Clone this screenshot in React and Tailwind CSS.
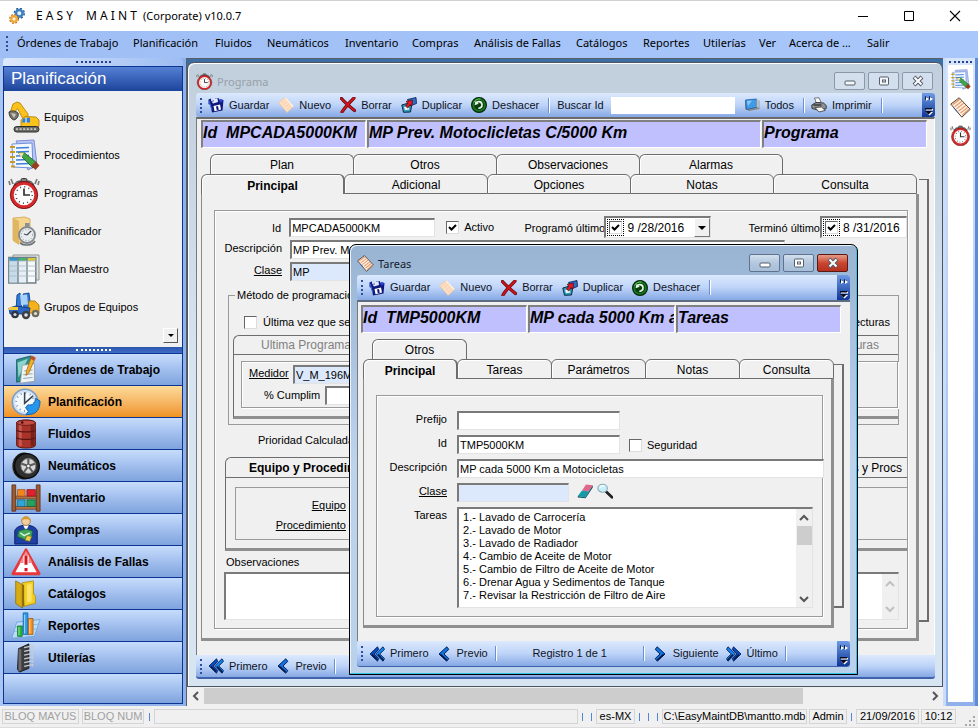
import React from "react";

const ARIAL = "font-['Liberation_Sans',Arial,sans-serif]";
const SEGOE = "font-['Noto_Sans','Segoe_UI',sans-serif]";

/* ---------- icons ---------- */

function Svg({ box = 16, className = "size-4", children }) {
  return (
    <svg viewBox={`0 0 ${box} ${box}`} className={`block shrink-0 ${className}`} aria-hidden="true">
      {children}
    </svg>
  );
}

const GearsIcon = () => (
  <Svg>
    <circle cx="10.3" cy="5.3" r="4.9" fill="none" stroke="#2a5f98" strokeWidth="1.6" strokeDasharray="2.1 1.75" />
    <circle cx="10.3" cy="5.3" r="3.3" fill="#e8f1fa" stroke="#3f82c4" strokeWidth="2.6" />
    <circle cx="5" cy="11" r="4.2" fill="none" stroke="#b96c14" strokeWidth="1.5" strokeDasharray="1.8 1.5" />
    <circle cx="5" cy="11" r="2.7" fill="#fff8e6" stroke="#f0a93c" strokeWidth="2.4" />
  </Svg>
);

const SaveIcon = () => (
  <Svg>
    <path d="M0.5 2.5 3 1.5V4L7 3.5V1l4 .3.3 2L15.500 3l-1 10.5L4 15.500 2.500 8 .5 7Z" fill="#10187c" />
    <path d="M3.500 4.500 6 4.200V1.500l3.500-.3.5 3.800L5 6.500Z" fill="#dfe8ff" />
    <path d="m11.500 2 3 .2-.2 2.800-2.400.4Z" fill="#2a44d8" />
    <path d="m5.500 9 6.500-1.400 1 5-6.500 1.600Z" fill="#fff" />
    <path d="m8 9.500 2-.4.8 3.600-2 .5Z" fill="#10187c" />
    <path d="M1 3.500 3.800 13" stroke="#3f6bf0" strokeWidth="1" />
  </Svg>
);

const NewIcon = () => (
  <Svg>
    <path d="M0.5 5.5 7 .5 15.5 9.5 9 15.5Z" fill="#fde0c4" stroke="#e9c09a" strokeWidth=".7" />
    <path d="M3 6 7.5 2.5M5 8l4.500-3.500M7 10l4.500-3.500M9 12.300l4.400-3.700" stroke="#f8cda8" strokeWidth="1" />
    <path d="m7 .7 8.300 8.800" stroke="#fff3e4" strokeWidth="1.2" />
  </Svg>
);

const NoteIcon = ({ className }) => (
  <Svg className={className}>
    <path d="M.6 5.4 7 .6 15.4 9.4 9 15.4Z" fill="#fff3e6" stroke="#3c2c20" strokeWidth=".7" />
    <path d="M2 5.8 7.6 1.6M3.6 7.4 9 3.2M5 9l5.4-4.2M6.6 10.6 12 6.4M8 12.2l5.4-4.2M9.3 14l5-4.6" stroke="#e59c6e" strokeWidth="1" />
    <path d="M3 8.5 6 11.8" stroke="#3a66c8" strokeWidth="1" strokeDasharray="1 1" />
  </Svg>
);

const DeleteIcon = () => (
  <Svg>
    <path d="M1.5 1.5C4 4.5 9 9 14.5 13.5M14 1C10 5 5 10 2 15" fill="none" stroke="#5e0508" strokeWidth="3.2" strokeLinecap="round" />
    <path d="M1.5 1.5C4 4.5 9 9 14.5 13.5M14 1C10 5 5 10 2 15" fill="none" stroke="#d3141c" strokeWidth="1.8" strokeLinecap="round" />
  </Svg>
);

const CopyIcon = () => (
  <Svg>
    <path d="M6.5 2.5 15 .5 15.5 6.5 9 9Z" fill="#2f6fc4" stroke="#0b1c4a" strokeWidth=".8" />
    <path d="M.8 8 6 6.500l4.500 2.500L9.500 15 2.500 15.300Z" fill="#2b9cbe" stroke="#0a2c40" strokeWidth="1" />
    <path d="M3 10 7 9l1.500 3.500-4.500.8Z" fill="#e8f5fb" />
    <path d="M5 4.500 11.500 3l-.5 6-1.800-1.400L6.800 11 4.500 9 7 6Z" fill="#e01b24" stroke="#5e0508" strokeWidth=".7" />
  </Svg>
);

const UndoIcon = () => (
  <Svg>
    <circle cx="8" cy="8" r="7.4" fill="#17761d" stroke="#07260b" strokeWidth="1.2" />
    <circle cx="8" cy="8" r="5" fill="#0a3d10" />
    <path d="M5 6.200C6 4 10.500 4 11 7.500c.3 2.500-2 4-3.600 3.600" fill="none" stroke="#e4f7e1" strokeWidth="1.7" />
    <path d="M3.600 8.200 4.300 4.200 7.800 6.800Z" fill="#e4f7e1" />
    <path d="M2.500 5.500C4 2.600 7 1.600 9.500 2" fill="none" stroke="#5fd05c" strokeWidth="1" />
  </Svg>
);

const AllIcon = () => (
  <Svg>
    <path d="M1 4 12 2.5 15.5 4v8L5 14 1 12Z" fill="#8b8b86" />
    <path d="M1.500 3 12.500 2v8.300L2.500 12.500Z" fill="#3f9be8" stroke="#1c5aa8" strokeWidth=".8" />
    <path d="m12.500 2 2.800 1.200v7.500l-2.800-.4Z" fill="#b7bfc6" />
    <path d="m3 4 5-.5L4 9Z" fill="#8cc9f8" />
  </Svg>
);

const PrinterIcon = () => (
  <Svg>
    <path d="M3.5 1 8 .8 10 5 5.5 6.5Z" fill="#fff" stroke="#555" strokeWidth=".8" />
    <path d="M.8 8 5 5.500l7.500.5 2.700 2.500v3L9 13.500 1 11.500Z" fill="#8f9296" stroke="#2c2c2c" strokeWidth=".9" />
    <path d="m4 10.500 6.500-.5 3.800 3.400L8 15Z" fill="#f7f7f2" stroke="#333" strokeWidth=".8" />
    <path d="M2.500 8h8" stroke="#222" strokeWidth="1.2" />
  </Svg>
);

const ClockIcon = ({ className }) => (
  <Svg box={32} className={className}>
    <path d="M5 7 3 2M27 7l2-5M2 8 1 4M30 8l1-4" stroke="#777" strokeWidth="1.6" fill="none" />
    <path d="M6 9c1-5 6-6 8-4ZM26 9c-1-5-6-6-8-4Z" fill="#9a9a9a" stroke="#333" strokeWidth="1" />
    <rect x="13" y="1.5" width="6" height="4" rx="1.5" fill="#888" stroke="#333" />
    <circle cx="16" cy="18" r="12" fill="#fdfdfd" stroke="#d42a2c" strokeWidth="3.4" />
    <circle cx="16" cy="18" r="13.7" fill="none" stroke="#5a0709" strokeWidth=".8" />
    <circle cx="16" cy="18" r="8.2" fill="none" stroke="#444" strokeWidth="1.6" strokeDasharray="1 3.3" />
    <path d="M16 11.5V18h6" fill="none" stroke="#333" strokeWidth="1.7" />
  </Svg>
);

const DoubleLeft = () => (
  <Svg>
    <path d="M8.5.8 1 8l7.500 7.200 1.200-2.600L5 8l4.700-4.600Z" fill="#0a4cc0" stroke="#06205e" strokeWidth=".9" />
    <path d="M14 .8 6.500 8l7.500 7.200L15.500 12.600 10.800 8l4.700-4.600Z" fill="#1483e8" stroke="#06205e" strokeWidth=".9" />
    <path d="m9 8.400 5.600 6M3 8.400l5 5" stroke="#041544" strokeWidth="1.4" />
  </Svg>
);
const SingleLeft = () => (
  <Svg>
    <path d="M10.8.8 3 8l7.800 7.200 2-2.600L8 8l4.800-4.600Z" fill="#1272dc" stroke="#06205e" strokeWidth="1" />
    <path d="m4.300 8.400 6.300 5.800" stroke="#041544" strokeWidth="1.6" />
  </Svg>
);
const SingleRight = () => (
  <Svg>
    <path d="M5.2.8 13 8l-7.800 7.200-2-2.600L8 8 3.200 3.400Z" fill="#1272dc" stroke="#06205e" strokeWidth="1" />
    <path d="m11.700 8.400-6.300 5.800" stroke="#041544" strokeWidth="1.6" />
  </Svg>
);
const DoubleRight = () => (
  <Svg>
    <path d="M7.500.8 15 8l-7.500 7.200-1.200-2.600L11 8 6.300 3.400Z" fill="#0a4cc0" stroke="#06205e" strokeWidth=".9" />
    <path d="M2 .8 9.500 8 2 15.200.5 12.600 5.200 8 .5 3.400Z" fill="#1483e8" stroke="#06205e" strokeWidth=".9" />
    <path d="m7 8.400-5.600 6M13 8.400l-5 5" stroke="#041544" strokeWidth="1.4" />
  </Svg>
);

const EraserIcon = () => (
  <Svg>
    <path d="M5 7.5 9 1.5 15.8 2.2 12 8.5Z" fill="#e0678a" />
    <path d="M5 7.5 12 8.5 8.2 14.2 .8 13Z" fill="#159aa8" />
    <path d="M15.8 2.2V4.4L8.6 15.2 .8 14.4V13l7.4 1.2Z" fill="#0c5a6c" />
  </Svg>
);
const SearchIcon = () => (
  <Svg>
    <path d="m9.500 9 5.500 5.200" stroke="#222" strokeWidth="2.8" strokeLinecap="round" />
    <ellipse cx="5.6" cy="5.2" rx="4.8" ry="4" fill="#c9effb" stroke="#8fa9b6" strokeWidth="1.1" />
    <path d="M3 4.500C4 3 6 2.600 7.400 3.200" stroke="#fff" strokeWidth="1.1" fill="none" />
  </Svg>
);

const ExcavatorIcon = () => (
  <Svg box={32} className="size-8">
    <path d="M2 12 5 3 9 1l3 1 8 11v6l-4 1L9.500 7.500 6 12Z" fill="#fbc21c" stroke="#b07a08" strokeWidth=".8" />
    <path d="M1 11c3-2 7-1 9 1 1 3-1 6-4 7C3 18 1 15 1 11Z" fill="#77756c" stroke="#3d3b36" />
    <path d="m3 12 5 1-2 4Z" fill="#c9c7bd" />
    <path d="M13 19 17 15.500l11 .5 3 3v6.500H13Z" fill="#fbc21c" stroke="#b07a08" strokeWidth=".8" />
    <path d="m15 17.500 7-1v5h-8Z" fill="#2d7fd6" />
    <path d="M18 17v5" stroke="#fff" />
    <rect x="6" y="25.5" width="25" height="5.5" rx="2.700" fill="#6a6a66" stroke="#2f2f2d" />
    <path d="M8 28.200h21" stroke="#c8c8c2" strokeWidth="1.8" strokeDasharray="2 1.6" />
  </Svg>
);
const ProcedureIcon = ({ className = "size-8" }) => (
  <Svg box={32} className={className}>
    <path d="m8 2 18-1 3 25-9 5Z" fill="#b9c6f4" stroke="#7d8fd4" />
    <path d="m4 5 20-1 1 25L5 28Z" fill="#f3f8ff" stroke="#6f8fd8" />
    <path d="m8 9 13-.5M8 13l13-.5M8 17l13-.5M8 21l13-.5M8 25l13-.5" stroke="#3d7fd6" strokeWidth="1.4" />
    <path d="M2 8h5M2 13h5M2 18h5M2 23h5M3 27.500h4" stroke="#c99a28" strokeWidth="2" />
    <path d="M10 14 16 13.500 29 24l-4 5Z" fill="#3fa545" stroke="#1b5c22" strokeWidth=".8" />
    <path d="m10 14 3.500 4.500 2.500-5Z" fill="#f5ddb0" />
    <path d="m27.500 22.500 4 4-4 4.500-4-4Z" fill="#9c3c1e" />
  </Svg>
);
const PlannerIcon = () => (
  <Svg box={32} className="size-8">
    <path d="M5 3 17 2l5 2v22L14 28 5 25Z" fill="#f4d690" stroke="#cfa44f" strokeWidth=".8" />
    <path d="M5 3 11 6v24L5 26Z" fill="#e2b65e" />
    <circle cx="19" cy="20" r="8" fill="#e8ecee" stroke="#80888c" strokeWidth="1.8" />
    <rect x="17" y="8" width="4.5" height="3.5" fill="#8a9296" />
    <circle cx="19" cy="20" r="5.6" fill="none" stroke="#8b9498" strokeWidth="1" strokeDasharray="1 2" />
    <path d="m19 20 4-4M19 20l-3-1" stroke="#475055" strokeWidth="1.3" />
    <path d="M12 28c4 3 12 3 15-2" stroke="#6a7276" strokeWidth="1.6" fill="none" />
  </Svg>
);
const GridIcon = () => (
  <Svg box={32} className="size-8">
    <path d="M5 2h26v25H5Z" fill="#dfe3e0" stroke="#8d9792" />
    <path d="M.8 4.500h27v25.500H.8Z" fill="#f7fafc" stroke="#6f7d86" strokeWidth="1.4" />
    <path d="M1.500 5H10V8H1.500Z" fill="#2f93d0" />
    <path d="M10 5h9V8h-9Z" fill="#49b270" />
    <path d="M19 5h8.500V8H19Z" fill="#d7c83c" />
    <path d="M1.500 8H10v21.500H1.500Z" fill="#c7dcea" />
    <path d="M10 8h9v21.500h-9Z" fill="#e6eff6" />
    <path d="M10 5v25M19 5v25" stroke="#6f7d86" strokeWidth="1.3" />
    <path d="M1 8h27M1 13h27M1 18h27M1 23h27" stroke="#a9b6c0" strokeWidth=".8" />
  </Svg>
);
const ForkliftIcon = () => (
  <Svg box={32} className="size-8">
    <path d="M9 4 12 2l2 18H8ZM15 3l6-1 2 17h-7Z" fill="#2f7ad8" stroke="#123f8c" strokeWidth=".9" />
    <path d="m12 4 7-.5 1 10-7 .5Z" fill="#a9d2fb" />
    <path d="M21 10h6l4 4v8H20Z" fill="#f5b21c" stroke="#a56f06" strokeWidth=".8" />
    <path d="M1 17 8 15l14 2-1 6H2Z" fill="#2c66c4" stroke="#10306c" strokeWidth=".8" />
    <path d="M1 16h9v3H1Z" fill="#f2c93a" />
    <circle cx="7" cy="23.5" r="3.8" fill="#2d3440" /><circle cx="7" cy="23.5" r="1.6" fill="#cfd6dd" />
    <circle cx="18" cy="24" r="4.2" fill="#3c3f46" /><circle cx="18" cy="24" r="1.8" fill="#dfe3e8" />
    <circle cx="27.5" cy="22.5" r="3.8" fill="#6d6a5e" /><circle cx="27.5" cy="22.5" r="1.6" fill="#e5e1cf" />
  </Svg>
);

const OrdersIcon = () => (
  <Svg box={32} className="size-[30px]">
    <path d="m6 5 15-4v24L6 29Z" fill="#2f8f8b" stroke="#1d5f66" />
    <path d="m7 8 11-4-10 20Z" fill="#8fd3cd" />
    <path d="M12 11 25 9v19l-15 2Z" fill="#eef3f6" stroke="#8a979d" strokeWidth=".8" />
    <path d="m14 17 9-1M13 21l10-1M13 25l10-1" stroke="#8fa3ad" />
    <path d="m22 1 4 2-7 16-3 3 .5-5Z" fill="#f2b12a" stroke="#a1660e" strokeWidth=".8" />
    <path d="m22 1 4 2-1.400 3-4-2Z" fill="#c04a2b" />
  </Svg>
);
const PlanIcon = () => (
  <Svg box={32} className="size-[30px]">
    <circle cx="15" cy="16" r="13.6" fill="#cfe0f2" stroke="#7c9dc6" strokeWidth="1.8" />
    <circle cx="15" cy="16" r="10.8" fill="#f4f9fe" />
    <circle cx="15" cy="16" r="9.5" fill="none" stroke="#6582a4" strokeWidth="1.8" strokeDasharray="1 3.97" />
    <path d="M14.500 5.500v12l9-8" stroke="#35424f" strokeWidth="1.6" fill="none" />
    <path d="M18 19c5 1 8-2 8-7l5 3c0 9-4 13-9 14l-6 .5 2.500-3.500-3-4Z" fill="#2695ea" stroke="#0e5aaa" strokeWidth=".9" />
  </Svg>
);
const BarrelIcon = () => (
  <Svg box={32} className="size-[30px]">
    <path d="M6 4c0-4 20-4 20 0v24c0 4-20 4-20 0Z" fill="#a7332b" stroke="#5a1410" />
    <path d="M10 5v24" stroke="#c4594f" strokeWidth="3" />
    <path d="M23 6v23" stroke="#7a201a" strokeWidth="4" />
    <ellipse cx="16" cy="4" rx="10" ry="2.8" fill="#c24c42" stroke="#5a1410" strokeWidth=".8" />
    <path d="M6 12c3 2.400 17 2.400 20 0M6 20c3 2.400 17 2.400 20 0" stroke="#5a1410" strokeWidth="1.4" fill="none" />
    <circle cx="12" cy="3.8" r="1.3" fill="#3d0d0a" />
  </Svg>
);
const TireIcon = () => (
  <Svg box={32} className="size-[30px]">
    <ellipse cx="14" cy="16" rx="12.5" ry="14.500" fill="#161616" />
    <circle cx="17" cy="16" r="13.2" fill="#2f2f2f" stroke="#0a0a0a" strokeWidth="1.4" />
    <circle cx="18.5" cy="16" r="8" fill="#d8d8d8" stroke="#777" />
    <path d="M18.500 16V8.500M18.500 16l7-2.500M18.500 16l4.600 6.400M18.500 16l-4.600 6.400M18.500 16l-7-2.500" stroke="#5b5b5b" strokeWidth="2.2" />
    <circle cx="18.5" cy="16" r="2" fill="#efefef" stroke="#555" />
    <path d="M3 9c-2 5-2 10 0 14" stroke="#6a6a6a" strokeWidth="1.4" fill="none" strokeDasharray="2 2" />
  </Svg>
);
const ShelfIcon = () => (
  <Svg box={32} className="size-[30px]">
    <path d="M1 2h4v28H1ZM27 2h4v28h-4Z" fill="#9a5a34" stroke="#5f3117" strokeWidth=".9" />
    <path d="M5 14h22v3H5ZM5 25h22v3H5Z" fill="#b77346" stroke="#5f3117" strokeWidth=".7" />
    <path d="M7 7h8v7H7Z" fill="#f2861c" stroke="#a34e08" strokeWidth=".7" />
    <path d="M17 7h9v7h-9Z" fill="#e0202a" stroke="#860c12" strokeWidth=".7" />
    <path d="M7 18h8v7H7Z" fill="#30a6d2" stroke="#0e5c7c" strokeWidth=".7" />
    <path d="M17 18h9v7h-9Z" fill="#26a05a" stroke="#0c5a2c" strokeWidth=".7" />
  </Svg>
);
const BuyerIcon = () => (
  <Svg box={32} className="size-[30px]">
    <path d="M4 31V17c1-4 6-6 12-6s11 2 12 6v14Z" fill="#1f3fa8" stroke="#0b1c60" />
    <path d="m13 11 3 6 3-6Z" fill="#fff" />
    <circle cx="16" cy="6.5" r="4.6" fill="#f3cf9c" stroke="#9b6b2c" strokeWidth=".8" />
    <path d="M11 6c0-6 10-6 10 0-3-2-7-2-10 0Z" fill="#d69a32" />
    <path d="m8 17 8-2 7 2-1 7-8 2-7-3Z" fill="#3fa55b" stroke="#14602c" strokeWidth=".8" />
    <path d="m10 19 4 3 6-3" stroke="#d9f2dc" strokeWidth="1.6" fill="none" />
    <path d="m17 22 5 1-2 5-5-1Z" fill="#f0d24a" stroke="#8c7410" strokeWidth=".7" />
  </Svg>
);
const WarnIcon = () => (
  <Svg box={32} className="size-[30px]">
    <path d="M16 3 30 28.500H2Z" fill="#fff" stroke="#e8383c" strokeWidth="3" strokeLinejoin="round" />
    <path d="M16 4 23 17 9 17Z" fill="#f58c8c" />
    <path d="M16 9v10" stroke="#fff" strokeWidth="5.5" />
    <path d="M16 9v10M16 22.500v3.400" stroke="#d3161b" strokeWidth="3.2" />
  </Svg>
);
const CatalogIcon = () => (
  <Svg box={32} className="size-[30px]">
    <path d="M12 4 24 2v14l2 2v8l-12 3Z" fill="#f3cf25" stroke="#a98608" strokeWidth=".8" />
    <path d="m17 6 5-1v19l-5 1Z" fill="#fbe468" />
    <path d="m5 2 7 4v25l-7-5Z" fill="#d9ab12" stroke="#8c6b06" strokeWidth=".8" />
    <path d="M12 6h2v22l-2 3Z" fill="#8c6b06" />
  </Svg>
);
const ChartIcon = () => (
  <Svg box={32} className="size-[30px]">
    <path d="M6 12 31 9 25 27 1 29Z" fill="#bcdcf8" stroke="#6fa8dd" />
    <path d="m5 17 24-3M3 22l24-3M14 11 9 28M23 10l-5 17" stroke="#7db2e4" strokeWidth=".8" />
    <path d="M7 16h5v11H7Z" fill="#22b83a" stroke="#0d6d1d" strokeWidth=".8" />
    <path d="M13 2h5v23h-5Z" fill="#2c9cec" stroke="#125d9e" strokeWidth=".8" />
    <path d="M18.500 8h5v17h-5Z" fill="#f5921e" stroke="#9e540a" strokeWidth=".8" />
    <path d="M14.500 4v20M8.500 17v9M20 9v15" stroke="#fff" strokeOpacity=".6" />
  </Svg>
);
const ChipIcon = () => (
  <Svg box={32} className="size-[30px]">
    <path d="M8 6 19 1v26L9 31 7 28Z" fill="#3d3d40" stroke="#161618" />
    <path d="m8 6 3 1v22l-3 1Z" fill="#6b6b70" />
    <path d="m14 5 9-2v2M14 9l9-2v2M14 13l9-2v2M14 17l9-2v2M14 21l9-2v2M14 25l9-2v2" stroke="#c9ccd2" strokeWidth="1.5" fill="none" />
  </Svg>
);

const Chevron = ({ dir, className = "text-[#555]" }) => {
  const d = { up: "M2 8 6 4 10 8", down: "M2 4 6 8 10 4", left: "M8 2 4 6 8 10", right: "M4 2 8 6 4 10" }[dir];
  return (
    <svg viewBox="0 0 12 12" className={`block size-3 ${className}`} aria-hidden="true">
      <path d={d} fill="none" stroke="currentColor" strokeWidth="2" />
    </svg>
  );
};

/* ---------- small parts ---------- */

function Grip() {
  return <span className="h-[15px] w-0 shrink-0 border-l-2 border-dotted border-[#2b4f9b]" />;
}

function Sep() {
  return <span className="h-[15px] w-[2px] shrink-0 border-l border-r border-l-[#6a8fd2] border-r-white" />;
}

function ToolButton({ icon: Icon, children }) {
  return (
    <button type="button" className="flex shrink-0 items-center gap-[5px] whitespace-nowrap">
      <Icon />
      {children}
    </button>
  );
}

function Overflow() {
  return (
    <button
      type="button"
      aria-label="Más opciones"
      className="ml-auto flex h-full w-[13px] shrink-0 items-center justify-center rounded-r-[3px] bg-gradient-to-b from-[#6f9be6] to-[#0f3596]"
    >
      <svg viewBox="0 0 13 24" className="block h-6 w-[13px]" aria-hidden="true">
        <path d="m3 3 3 2-3 2Zm4 0 3 2-3 2Z" fill="#0a1a44" />
        <path d="m4 4 3 2-3 2Zm4 0 3 2-3 2Z" fill="#fff" />
        <path d="M4 16h7v1.500H4ZM4 19h7l-3.500 3.500Z" fill="#fff" />
        <path d="M3 15h7v1.500H3ZM3 18h7L6.500 21.500Z" fill="#0a0a1a" />
      </svg>
    </button>
  );
}

function Toolbar({ className, children }) {
  return (
    <div
      className={`flex shrink-0 items-center rounded-[3px] bg-gradient-to-b from-[#dce9fd] via-[#bed4f8] to-[#86a8e4] pl-1 text-[11px] text-[#10131c] ${className}`}
    >
      <span className="mr-[6px] flex"><Grip /></span>
      {children}
    </div>
  );
}

function EditButtons() {
  return (
    <>
      <ToolButton icon={SaveIcon}>Guardar</ToolButton>
      <ToolButton icon={NewIcon}>Nuevo</ToolButton>
      <ToolButton icon={DeleteIcon}>Borrar</ToolButton>
      <ToolButton icon={CopyIcon}>Duplicar</ToolButton>
      <ToolButton icon={UndoIcon}>Deshacer</ToolButton>
      <Sep />
    </>
  );
}

const SUNK = "border border-t-2 border-l-2 border-[#e3e3e3] border-t-[#7a7a7a] border-l-[#7a7a7a]";

function Input({ label, tint = false, className = "", ...rest }) {
  return (
    <input
      type="text"
      aria-label={label}
      className={`block h-[19px] shrink-0 rounded-none px-[1px] text-[11px] text-black outline-none ${tint ? "bg-[#dce9fd]" : "bg-white"} ${SUNK} ${className}`}
      {...rest}
    />
  );
}

function Check({ id, label, checked = false }) {
  return (
    <span className="relative block size-[13px] shrink-0">
      <input
        id={id}
        type="checkbox"
        aria-label={label}
        defaultChecked={checked}
        className="peer block size-[13px] appearance-none border border-t-[#666] border-l-[#666] border-r-[#dcdcdc] border-b-[#dcdcdc] bg-white"
      />
      <svg viewBox="0 0 13 13" className="pointer-events-none absolute inset-0 hidden size-[13px] peer-checked:block" aria-hidden="true">
        <path d="M3 6 5.500 8.500 10 4" fill="none" stroke="#000" strokeWidth="2" />
      </svg>
    </span>
  );
}

function DateField({ label, value, className, arrow }) {
  return (
    <div className={`flex h-[22px] shrink-0 items-center bg-white pl-[1px] ${SUNK} ${className}`}>
      <span className="border border-dotted border-black p-px"><Check label={`${label} activo`} checked /></span>
      <input
        type="text"
        aria-label={label}
        defaultValue={value}
        className="ml-[3px] block h-4 w-0 min-w-0 flex-1 bg-white text-[12px] text-black outline-none"
      />
      {arrow && (
        <button type="button" aria-label="Abrir calendario" className="flex h-full w-4 items-center justify-center border border-r-[#777] border-b-[#777] border-t-white border-l-white bg-[#f0f0f0]">
          <span className="border-x-4 border-t-4 border-x-transparent border-t-black" />
        </button>
      )}
    </div>
  );
}

function Window({ title, icon: Icon, active, className, children }) {
  const btn = active
    ? "border-[#5f7391] bg-gradient-to-b from-[#d3e0ee] via-[#b3c7de] to-[#a7bfd9] text-[#4a5a70]"
    : "border-[#8a98aa] bg-[#d3dfec] text-[#5c6878]";
  const close = active
    ? "border-[#5c1a14] bg-gradient-to-b from-[#e59a88] via-[#c9452f] to-[#b5301f] text-white"
    : btn;
  const glyph = active ? "#fff" : "#f4f6f8";
  return (
    <section
      className={`absolute flex flex-col rounded-t-[7px] border px-[7px] pb-[7px] ${
        active
          ? "border-black bg-gradient-to-b from-[#98b4d2] via-[#bcd3ee] to-[#b9d1ea] shadow-[inset_-1px_-1px_0_#33c3ea,inset_1px_1px_0_#eaf3fc]"
          : "border-[#4c5560] bg-gradient-to-b from-[#c1cedb] via-[#d7e4f2] to-[#d7e4f2] shadow-[inset_1px_1px_0_#fff]"
      } ${className}`}
    >
      <header className="flex h-[30px] shrink-0 items-center pr-[2px] pt-[6px]">
        <Icon className="mr-1 size-[17px]" />
        <h2 className={`pt-[2px] text-[11px] ${SEGOE} ${active ? "text-[#17202c]" : "text-[#97a0aa]"}`}>{title}</h2>
        <div className="ml-auto flex gap-[3px]">
          <button type="button" aria-label="Minimizar" className={`flex h-[18px] w-[31px] items-center justify-center rounded-[2px] border ${btn}`}>
            <svg viewBox="0 0 12 12" className="size-3"><rect x="1" y="6" width="10" height="4" rx="1" fill={glyph} stroke="#555e6c" /></svg>
          </button>
          <button type="button" aria-label="Maximizar" className={`flex h-[18px] w-[31px] items-center justify-center rounded-[2px] border ${btn}`}>
            <svg viewBox="0 0 12 12" className="size-3"><rect x="1.500" y="2" width="9" height="8" rx="1" fill={glyph} stroke="#555e6c" /><rect x="4.500" y="5" width="3" height="2" fill="none" stroke="#555e6c" /></svg>
          </button>
          <button type="button" aria-label="Cerrar" className={`flex h-[18px] w-[31px] items-center justify-center rounded-[2px] border ${close}`}>
            <svg viewBox="0 0 12 12" className="size-3">
              <path d="m2 2 8 8M10 2 2 10" stroke="#555e6c" strokeWidth="4" />
              <path d="m2.500 2.500 7 7M9.500 2.500l-7 7" stroke="#fff" strokeWidth="2" />
            </svg>
          </button>
        </div>
      </header>
      {children}
    </section>
  );
}

function Caption({ className, children }) {
  return (
    <div className={`h-7 shrink-0 overflow-hidden whitespace-pre border border-t-2 border-l-2 border-white border-t-[#808080] border-l-[#808080] bg-[#c0c0ff] text-[16px] leading-[21px] font-bold italic text-black ${className}`}>
      {children}
    </div>
  );
}

const TAB = "flex h-5 shrink-0 items-center justify-center rounded-t-[6px] border-t border-l border-r border-[#6d6d6d] bg-[#f0f0f0] text-[12px] text-black shadow-[inset_1px_1px_0_#fff]";

function Tabs({ back, front, width, wrap }) {
  return (
    <div role="tablist" className={`flex flex-col ${wrap}`}>
      <div className="flex pl-[9px]">
        {back.map((t) => (
          <button key={t} type="button" role="tab" aria-selected="false" className={`${TAB} -mr-px ${width}`}>{t}</button>
        ))}
      </div>
      <div className="flex">
        {front.map((t, i) => (
          <button
            key={t}
            type="button"
            role="tab"
            aria-selected={i === 0}
            className={`${TAB} -mr-px ${width} pt-[2px] ${i === 0 ? "border-r-2 font-bold" : "border-b border-b-[#6d6d6d]"}`}
          >
            {t}
          </button>
        ))}
      </div>
    </div>
  );
}

const PAGE = "border-l border-r-[3px] border-b-[3px] border-l-[#8a8a8a] border-r-[#8f8f8f] border-b-[#8f8f8f] bg-[#f0f0f0]";
const BOX = "border border-[#9a9a9a] shadow-[inset_1px_1px_0_#fff,1px_1px_0_#fff]";

/* ---------- application data ---------- */

const MENU = [
  ["Órdenes de Trabajo", "w-[116px]"],
  ["Planificación", "w-[82px]"],
  ["Fluidos", "w-[52px]"],
  ["Neumáticos", "w-[78px]"],
  ["Inventario", "w-[67px]"],
  ["Compras", "w-[62px]"],
  ["Análisis de Fallas", "w-[102px]"],
  ["Catálogos", "w-[67px]"],
  ["Reportes", "w-[60px]"],
  ["Utilerías", "w-[56px]"],
  ["Ver", "w-[30px]"],
  ["Acerca de ...", "w-[78px]"],
  ["Salir", "w-[30px]"],
];

const SHORTCUTS = [
  ["Equipos", ExcavatorIcon],
  ["Procedimientos", ProcedureIcon],
  ["Programas", () => <ClockIcon className="size-8" />],
  ["Planificador", PlannerIcon],
  ["Plan Maestro", GridIcon],
  ["Grupos de Equipos", ForkliftIcon],
];

const SECTIONS = [
  ["Órdenes de Trabajo", OrdersIcon],
  ["Planificación", PlanIcon],
  ["Fluidos", BarrelIcon],
  ["Neumáticos", TireIcon],
  ["Inventario", ShelfIcon],
  ["Compras", BuyerIcon],
  ["Análisis de Fallas", WarnIcon],
  ["Catálogos", CatalogIcon],
  ["Reportes", ChartIcon],
  ["Utilerías", ChipIcon],
];

const TASKS = [
  " 1.- Lavado de Carrocería",
  " 2.- Lavado de Motor",
  " 3.- Lavado de Radiador",
  " 4.- Cambio de Aceite de Motor",
  " 5.- Cambio de Filtro de Aceite de Motor",
  " 6.- Drenar Agua y Sedimentos de Tanque",
  " 7.- Revisar la Restricción de Filtro de Aire",
].join("\n");

/* ---------- regions ---------- */

function TitleBar() {
  return (
    <header className="flex h-[31px] shrink-0 items-center border-t border-[#d0d0d0] bg-white pl-[9px]">
      <GearsIcon />
      <h1 className={`ml-[11px] flex items-center whitespace-pre text-[11px] text-black ${SEGOE}`}>
        <span className="w-[50px] text-[12px]">E A S Y</span>
        <span className="w-[57px] text-[12px]">M A I N T</span>
        <span>(Corporate) v10.0.7</span>
      </h1>
      <div className="ml-auto flex">
        <button type="button" aria-label="Minimizar" className="flex h-[30px] w-[46px] items-center justify-center">
          <svg viewBox="0 0 12 12" className="size-3"><path d="M1 6.500h10" stroke="#000" /></svg>
        </button>
        <button type="button" aria-label="Maximizar" className="flex h-[30px] w-[46px] items-center justify-center">
          <svg viewBox="0 0 12 12" className="size-3"><path d="M1.500 1.500h9v9h-9Z" fill="none" stroke="#000" /></svg>
        </button>
        <button type="button" aria-label="Cerrar" className="flex h-[30px] w-[46px] items-center justify-center">
          <svg viewBox="0 0 12 12" className="size-3"><path d="m1 1 10 10M11 1 1 11" stroke="#000" strokeWidth="1.100" /></svg>
        </button>
      </div>
    </header>
  );
}

function MenuBar() {
  return (
    <nav className={`flex h-[27px] shrink-0 items-center bg-gradient-to-r from-[#9ebef5] to-[#a9c7fa] pl-[6px] pb-[2px] text-[11px] text-black ${SEGOE}`}>
      <span className="mr-[9px] flex"><Grip /></span>
      {MENU.map(([label, w]) => (
        <button key={label} type="button" className={`shrink-0 whitespace-nowrap text-left ${w}`}>{label}</button>
      ))}
    </nav>
  );
}

function Sidebar() {
  return (
    <aside className="flex w-[186px] shrink-0 flex-col bg-gradient-to-r from-[#a9c5f3] to-[#8fb1ea] px-[3px] pb-[2px]">
      <div className="flex h-2 shrink-0 items-center justify-center rounded-t-[4px] bg-gradient-to-r from-[#dce8fb] to-[#9dbcf2]">
        <span className="h-0 w-[35px] border-t-2 border-dotted border-[#27408b]" />
      </div>
      <div className="flex min-h-0 flex-1 flex-col border border-[#0a3592]">
        <h2 className="flex h-6 shrink-0 items-center bg-gradient-to-b from-[#5580d4] to-[#1d449c] pl-[7px] text-[17px] text-white">Planificación</h2>
        <div className="flex min-h-0 flex-1 flex-col bg-[#f0f0f0] pt-[7px]">
          {SHORTCUTS.map(([label, Icon]) => (
            <button key={label} type="button" className="flex h-[38px] shrink-0 items-center gap-1 pl-1 text-left text-[11px] text-black">
              <Icon />
              {label}
            </button>
          ))}
          <button type="button" aria-label="Más" className="mt-auto mr-1 mb-1 ml-auto flex size-[15px] items-center justify-center border border-t-white border-l-white border-r-[#555] border-b-[#555] bg-[#f0f0f0]">
            <span className="border-x-[3px] border-t-[3px] border-x-transparent border-t-black" />
          </button>
        </div>
        <div className="flex h-[6px] shrink-0 items-center justify-center bg-gradient-to-b from-[#2c56ae] to-[#3f6cc6]">
          <span className="h-0 w-[35px] border-t-2 border-dotted border-white" />
        </div>
        {SECTIONS.map(([label, Icon]) => (
          <button
            key={label}
            type="button"
            className={`flex h-8 shrink-0 items-center gap-[7px] border-t border-[#0a3592] bg-gradient-to-b pl-[7px] text-left text-[12px] font-bold text-black ${
              label === "Planificación" ? "from-[#fbdc9a] to-[#ef9320]" : "from-[#c6dcfc] to-[#7fa3de]"
            }`}
          >
            <Icon />
            {label}
          </button>
        ))}
        <div className="h-[30px] shrink-0 border-t border-[#0a3592] bg-gradient-to-b from-[#c6dcfc] to-[#7fa3de]" />
      </div>
    </aside>
  );
}

function ProgramaWindow() {
  return (
    <Window title="Programa" icon={ClockIcon} className="inset-x-0 top-[3px] bottom-0 pl-[8px]">
      <Toolbar className="h-6 gap-[9px]">
        <span className="-ml-[9px] flex items-center gap-[9px]"><EditButtons /></span>
        <span className="-ml-[2px] flex items-center gap-[7px]">
          <label htmlFor="buscar" className="shrink-0">Buscar Id</label>
          <input id="buscar" type="text" className="h-[17px] w-[124px] shrink-0 bg-white outline-none" />
        </span>
        <ToolButton icon={AllIcon}>Todos</ToolButton>
        <span className="flex items-center gap-[6px]">
          <Sep />
          <ToolButton icon={PrinterIcon}>Imprimir</ToolButton>
        </span>
        <Sep />
        <Overflow />
      </Toolbar>
      <div className="flex min-h-0 flex-1 flex-col border-t-2 border-l border-r border-t-[#6b6b6b] border-l-[#7a7a7a] border-r-white bg-[#f0f0f0] pt-[1px] pl-1">
        <div className="flex gap-[1px]">
          <Caption className="w-[165px]">{"Id  MPCADA5000KM"}</Caption>
          <Caption className="w-[394px]">MP Prev. Motoclicletas C/5000 Km</Caption>
          <Caption className="w-[165px]">Programa</Caption>
        </div>
        <Tabs
          wrap="mt-[6px]"
          width="w-[144px]"
          back={["Plan", "Otros", "Observaciones", "Alarmas"]}
          front={["Principal", "Adicional", "Opciones", "Notas", "Consulta"]}
        />
        <div className="mb-[14px] flex min-h-0 flex-1">
          <div className={`flex w-[718px] shrink-0 flex-col pt-4 pr-[8px] pb-[9px] pl-3 ${PAGE}`}>
            <div className={`flex min-h-0 flex-1 flex-col pt-[5px] ${BOX}`}>
              <div className="flex h-[22px] shrink-0 items-center text-[11px]">
                <label htmlFor="pid" className="w-[67px] pt-[2px] text-right">Id</label>
                <Input id="pid" defaultValue="MPCADA5000KM" className="ml-2 w-[146px]" />
                <span className="ml-[11px]"><Check id="activo" checked /></span>
                <label htmlFor="activo" className="ml-[5px] w-[61px]">Activo</label>
                <span className="w-[80px] pt-[2px] whitespace-nowrap">Programó último</span>
                <DateField label="Programó último" value="9 /28/2016" arrow className="w-[107px]" />
                <span className="ml-[37px] w-[72px] pt-[2px] whitespace-nowrap">Terminó último</span>
                <DateField label="Terminó último" value="8 /31/2016" className="w-[87px]" />
              </div>
              <div className="mt-[2px] flex h-[19px] shrink-0 text-[11px]">
                <label htmlFor="pdesc" className="w-[67px] text-right">Descripción</label>
                <Input id="pdesc" defaultValue="MP Prev. Motoclicletas C/5000 Km" className="ml-2 w-[495px]" />
              </div>
              <div className="mt-[3px] flex h-[19px] shrink-0 text-[11px]">
                <label htmlFor="pclase" className="w-[67px] text-right underline">Clase</label>
                <Input id="pclase" defaultValue="MP" tint className="ml-2 w-[180px]" />
              </div>
              <fieldset className="mt-[7px] mr-2 ml-[13px] flex min-w-0 shrink-0 flex-col border border-[#9a9a9a] pl-1 pb-[5px] text-[11px]">
                <legend className="ml-[2px] h-[14px] px-[2px] leading-[14px]">Método de programación</legend>
                <div className="mt-[13px] mb-[6px] flex h-[14px] items-center">
                  <span className="ml-[11px]"><Check id="ultima" /></span>
                  <label htmlFor="ultima" className="ml-[6px]">Última vez que se</label>
                  <span className="mr-2 ml-auto">Lecturas</span>
                </div>
                <div className="flex h-5 items-center justify-between rounded-tl-[6px] border-t border-b border-l border-[#6d6d6d] pr-[19px] pl-[27px] text-[12px] text-[#808080]">
                  <span>Ultima Programación</span>
                  <span>Lecturas</span>
                </div>
                <div className="border-b-[3px] border-l border-b-[#8f8f8f] border-l-[#6d6d6d] pt-[6px] pb-2 pl-[7px]">
                  <div className={`flex h-[47px] flex-col gap-[2px] pt-[3px] pl-[7px] ${BOX}`}>
                    <div className="flex h-[19px]">
                      <label htmlFor="medidor" className="w-[44px] underline">Medidor</label>
                      <Input id="medidor" defaultValue="V_M_196M" tint className="w-[120px]" />
                    </div>
                    <div className="flex h-[19px] items-center">
                      <label htmlFor="cumplim" className="w-[76px] pl-[15px] whitespace-nowrap">% Cumplim</label>
                      <Input id="cumplim" className="w-[60px]" />
                    </div>
                  </div>
                </div>
              </fieldset>
              <span className="mt-2 ml-[43px] h-[14px] shrink-0 text-[11px] leading-[14px]">Prioridad Calculada</span>
              <div className="mt-[10px] ml-[10px] flex h-[21px] shrink-0 items-center justify-between rounded-tl-[6px] border-t border-b border-l border-[#6d6d6d] pr-[5px] pl-[23px] text-[12px]">
                <span className="font-bold">Equipo y Procedimiento</span>
                <span>Equipos y Procs</span>
              </div>
              <div className="ml-[10px] h-[73px] shrink-0 border-b-[3px] border-l border-b-[#8f8f8f] border-l-[#6d6d6d] pt-[9px] pl-[9px]">
                <div className="flex h-[53px] flex-col gap-[6px] border border-r-0 border-[#9a9a9a] pt-[10px] text-[11px] leading-[14px] underline">
                  <span className="w-[110px] text-right">Equipo</span>
                  <span className="w-[110px] text-right">Procedimiento</span>
                </div>
              </div>
              <label htmlFor="obs" className="mt-1 ml-[11px] h-[14px] shrink-0 text-[11px] leading-[14px]">Observaciones</label>
              <div className={`mt-[3px] mr-[8px] ml-[9px] flex h-[48px] shrink-0 bg-white ${SUNK}`}>
                <textarea id="obs" className="block min-w-0 flex-1 resize-none overflow-hidden outline-none" />
                <div className="flex w-4 flex-col items-center justify-between bg-[#f0f0f0] py-[4px]">
                  <Chevron dir="up" className="text-[#c0c0c0]" />
                  <Chevron dir="down" className="text-[#c0c0c0]" />
                </div>
              </div>
            </div>
          </div>
          <div className="-mt-[15px] mb-[19px] w-[10px] border-t border-r-2 border-b-2 border-[#6d6d6d]" />
        </div>
      </div>
      <Toolbar className="h-6 border-b-2 border-[#3f62ac]">
        <span className="flex items-center gap-[7px]">
          <ToolButton icon={DoubleLeft}>Primero</ToolButton>
          <ToolButton icon={SingleLeft}>Previo</ToolButton>
          <Sep />
        </span>
      </Toolbar>
    </Window>
  );
}

const ROW = "flex h-[19px] shrink-0 items-start";
const LAB = "mr-[10px] w-[70px] shrink-0 text-right";

function TareasWindow() {
  return (
    <Window title="Tareas" icon={NoteIcon} active className="top-[185px] left-[162px] h-[431px] w-[509px]">
      <Toolbar className="h-[25px]">
        <span className="flex items-center gap-[9px]"><EditButtons /></span>
        <Overflow />
      </Toolbar>
      <div className="flex min-h-0 flex-1 flex-col border-t-2 border-l border-t-[#5f6b80] border-l-[#7a7a7a] bg-[#f0f0f0] pt-[3px] pl-[3px]">
        <div className="flex gap-[1px]">
          <Caption className="w-[166px]">{"Id  TMP5000KM"}</Caption>
          <Caption className="w-[147px]">MP cada 5000 Km a</Caption>
          <Caption className="w-[165px]">Tareas</Caption>
        </div>
        <Tabs
          wrap="mt-[6px] pl-[2px]"
          width="w-[95px]"
          back={["Otros"]}
          front={["Principal", "Tareas", "Parámetros", "Notas", "Consulta"]}
        />
        <div className="mb-[13px] flex min-h-0 flex-1 pl-[2px]">
          <div className={`flex w-[471px] shrink-0 flex-col pt-4 pr-[8px] pb-[8px] pl-3 ${PAGE}`}>
            <div className={`flex min-h-0 flex-1 flex-col gap-[5px] pt-[15px] text-[11px] ${BOX}`}>
              <div className={ROW}>
                <label htmlFor="prefijo" className={LAB}>Prefijo</label>
                <Input id="prefijo" className="w-[163px]" />
              </div>
              <div className={ROW}>
                <label htmlFor="tid" className={LAB}>Id</label>
                <Input id="tid" defaultValue="TMP5000KM" className="w-[163px]" />
                <span className="mt-1 ml-[9px]"><Check id="seg" /></span>
                <label htmlFor="seg" className="mt-[2px] ml-[5px]">Seguridad</label>
              </div>
              <div className={ROW}>
                <label htmlFor="tdesc" className={LAB}>Descripción</label>
                <Input id="tdesc" defaultValue="MP cada 5000 Km a Motocicletas" className="w-[367px]" />
              </div>
              <div className={ROW}>
                <label htmlFor="tclase" className={`${LAB} underline`}>Clase</label>
                <Input id="tclase" tint className="w-[112px]" />
                <button type="button" aria-label="Borrar clase" className="ml-2"><EraserIcon /></button>
                <button type="button" aria-label="Buscar clase" className="ml-1"><SearchIcon /></button>
              </div>
              <div className="flex h-[101px] shrink-0 items-start">
                <label htmlFor="tareas" className={LAB}>Tareas</label>
                <div className={`flex h-full w-[356px] bg-white ${SUNK}`}>
                  <textarea id="tareas" defaultValue={TASKS} className="block min-w-0 flex-1 resize-none overflow-hidden pt-[2px] pl-[1px] text-[11px] leading-[13px] text-black outline-none" />
                  <div className="flex w-4 shrink-0 flex-col items-center bg-[#f0f0f0] pt-[3px] pb-[2px]">
                    <Chevron dir="up" />
                    <span className="mt-[2px] h-[19px] w-[15px] bg-[#cdcdcd]" />
                    <span className="mt-auto"><Chevron dir="down" /></span>
                  </div>
                </div>
              </div>
            </div>
          </div>
          <div className="-mt-[15px] mb-[20px] w-[10px] border-t border-r-2 border-b-2 border-[#6d6d6d]" />
        </div>
      </div>
      <Toolbar className="h-[26px] border-b border-[#3f62ac]">
        <span className="flex items-center gap-[7px]">
          <ToolButton icon={DoubleLeft}>Primero</ToolButton>
          <ToolButton icon={SingleLeft}>Previo</ToolButton>
          <Sep />
          <span className="w-[132px] shrink-0 text-center">Registro 1 de 1</span>
          <Sep />
          <ToolButton icon={SingleRight}>Siguiente</ToolButton>
          <ToolButton icon={DoubleRight}>Último</ToolButton>
          <Sep />
        </span>
        <Overflow />
      </Toolbar>
    </Window>
  );
}

function Desktop() {
  return (
    <main className="flex min-w-0 flex-1 flex-col border-t border-l border-[#5a5f66] bg-[#f0f0f0]">
      <div className="relative min-h-0 flex-1 overflow-hidden bg-[#3a6ea5]">
        <ProgramaWindow />
        <TareasWindow />
      </div>
      <div className="mb-[2px] flex h-[17px] shrink-0 items-center justify-between bg-[#f0f0f0] pt-px">
        <button type="button" aria-label="Desplazar a la izquierda" className="flex w-[17px] justify-center"><Chevron dir="left" /></button>
        <div className="h-4 flex-1"><div className="h-full w-[83%] bg-[#cdcdcd]" /></div>
        <button type="button" aria-label="Desplazar a la derecha" className="flex w-[17px] justify-center"><Chevron dir="right" /></button>
      </div>
    </main>
  );
}

function RightBar() {
  return (
    <aside className="flex w-[35px] shrink-0 flex-col border-l-[3px] border-r-[3px] border-l-[#c9dcf8] border-r-[#5f8ad6] bg-gradient-to-b from-[#d7e5fb] to-[#8fb0ea] px-[2px] pb-1">
      <div className="flex h-[7px] shrink-0 items-center justify-center">
        <span className="h-0 w-[23px] border-t-2 border-dotted border-[#27408b]" />
      </div>
      <div className="flex flex-1 flex-col items-center gap-[7px] bg-white pt-1">
        <button type="button" aria-label="Procedimientos"><ProcedureIcon className="size-[21px]" /></button>
        <button type="button" aria-label="Tareas"><NoteIcon className="size-[21px]" /></button>
        <button type="button" aria-label="Programas"><ClockIcon className="size-[21px]" /></button>
      </div>
    </aside>
  );
}

const CELL = "flex h-[15px] shrink-0 items-center justify-center border border-[#d4d4d4] whitespace-nowrap";
const Bar = () => <span className="mx-1 h-2 w-px shrink-0 bg-[#4f86d8]" />;

function StatusBar() {
  return (
    <footer className="flex h-[22px] shrink-0 items-center border-b border-[#dcdcdc] bg-[#f0f0f0] pr-[2px] pl-[2px] text-[11px] text-black">
      <span className={`${CELL} mr-[3px] w-[77px] text-[#a0a0a0]`}>BLOQ MAYUS</span>
      <span className={`${CELL} mr-[1px] w-[62px] text-[#a0a0a0]`}>BLOQ NUM</span>
      <Bar />
      <span className={`${CELL} min-w-0 flex-1 shrink`} />
      <Bar /><Bar />
      <span className={`${CELL} w-[39px]`}>es-MX</span>
      <Bar /><Bar /><Bar />
      <span className={`${CELL} w-[145px]`}>C:\EasyMaintDB\mantto.mdb</span>
      <span className={`${CELL} ml-[2px] w-[38px]`}>Admin</span>
      <Bar />
      <span className={`${CELL} w-[63px]`}>21/09/2016</span>
      <span className={`${CELL} ml-[2px] mr-2 w-[35px]`}>10:12</span>
      <svg viewBox="0 0 12 12" className="mt-2 size-3 shrink-0" aria-hidden="true">
        <path d="M9 1h2v2H9ZM9 5h2v2H9ZM5 5h2v2H5ZM9 9h2v2H9ZM5 9h2v2H5ZM1 9h2v2H1Z" fill="#a8a8a8" />
      </svg>
    </footer>
  );
}

export default function App() {
  return (
    <div className={`flex h-screen flex-col overflow-hidden bg-[#f0f0f0] ${ARIAL}`}>
      <TitleBar />
      <MenuBar />
      <div className="flex min-h-0 flex-1">
        <Sidebar />
        <Desktop />
        <RightBar />
      </div>
      <StatusBar />
    </div>
  );
}
